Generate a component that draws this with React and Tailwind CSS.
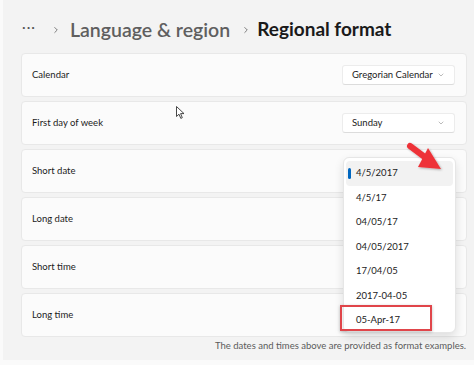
import { ChevronDown, ChevronRight } from 'lucide-react';

const ROWS = [
  { label: 'Calendar', value: 'Gregorian Calendar' },
  { label: 'First day of week', value: 'Sunday' },
  { label: 'Short date' },
  { label: 'Long date' },
  { label: 'Short time' },
  { label: 'Long time' },
];

const OPTIONS = ['4/5/2017', '4/5/17', '04/05/17', '04/05/2017', '17/04/05', '2017-04-05', '05-Apr-17'];

const font = { fontFamily: 'Lato, "Noto Sans", sans-serif' };

function Select({ value }) {
  return (
    <div className="w-[113px] h-[20px] flex items-center justify-between pl-[9px] pr-[9px] bg-white rounded-[3px] border border-[#ececec] border-b-[#dcdcdc] text-[9.5px] text-[#1b1b1b] whitespace-nowrap">
      <span>{value}</span>
      <ChevronDown className="w-[8px] h-[8px] text-[#777]" strokeWidth={1.5} />
    </div>
  );
}

export default function App() {
  return (
    <div className="w-[474px] h-[365px] bg-[#fafafa] relative overflow-hidden" style={font}>
      <div className="ml-[3px] h-[360px] bg-[#f3f3f3] flex flex-col">
        {/* Breadcrumb */}
        <div className="h-[53px] flex items-center pl-[19px] pt-[6px]">
          <span className="text-[14px] tracking-[1px] text-[#555] leading-none -mt-[5px]">···</span>
          <ChevronRight className="w-[10px] h-[10px] ml-[15px] text-[#666]" strokeWidth={2} />
          <span className="ml-[9px] text-[19.5px] font-semibold text-[#5f5f5f]">Language &amp; region</span>
          <ChevronRight className="w-[10px] h-[10px] ml-[11px] text-[#666]" strokeWidth={2} />
          <span className="ml-[6px] text-[19px] font-bold text-[#1a1a1a]">Regional format</span>
        </div>

        {/* Setting cards */}
        <div className="ml-[18px] w-[446px] flex flex-col gap-[4px]">
          {ROWS.map(({ label, value }) => (
            <div
              key={label}
              className="h-[44px] flex items-center justify-between pl-[10px] pr-[11px] bg-[#fbfbfb] border border-[#e8e8e8] rounded-[4px]"
            >
              <span className="text-[9.5px] text-[#1b1b1b]">{label}</span>
              {value && <Select value={value} />}
            </div>
          ))}
        </div>

        <p className="mt-[2px] w-[463px] text-right text-[9.5px] text-[#5b5b5b]">
          The dates and times above are provided as format examples.
        </p>
      </div>

      {/* Open dropdown */}
      <div className="absolute left-[343px] top-[157px] w-[113px] h-[176px] bg-white rounded-[6px] border border-[#e6e6e6] shadow-[0_4px_10px_rgba(0,0,0,0.12)] pt-[3px] px-[2px]">
        {OPTIONS.map((opt, i) => (
          <div
            key={opt}
            className={`relative h-[24.5px] flex items-center pl-[10px] text-[9.5px] text-[#1b1b1b] rounded-[4px] ${i === 0 ? 'bg-[#f2f2f2]' : ''}`}
          >
            {i === 0 && <span className="absolute left-[2px] top-[7px] w-[2.5px] h-[11px] rounded-full bg-[#0067c0]" />}
            {opt}
          </div>
        ))}
      </div>

      {/* Red highlight box */}
      <div className="absolute left-[340px] top-[305px] w-[92px] h-[26px] border-2 border-[#e0454a] shadow-[0_1px_3px_rgba(0,0,0,0.25)]" />

      {/* Red arrow annotation */}
      <svg className="absolute left-[400px] top-[138px]" width="50" height="40" viewBox="0 0 50 40">
        <defs>
          <filter id="sh" x="-20%" y="-20%" width="140%" height="140%">
            <feDropShadow dx="1" dy="1" stdDeviation="1" floodColor="#000" floodOpacity="0.3" />
          </filter>
        </defs>
        <g filter="url(#sh)">
          <line x1="10" y1="8" x2="26" y2="20" stroke="#ee3338" strokeWidth="6" strokeLinecap="round" />
          <polygon points="28,10 41,31 18,29" fill="#ee3338" />
        </g>
      </svg>

      {/* Mouse cursor */}
      <svg className="absolute left-[176px] top-[106px]" width="10" height="14" viewBox="0 0 10 14">
        <path d="M0.5 0.5 L0.5 10.5 L3 8.2 L4.8 12.4 L6.3 11.7 L4.6 7.6 L8 7.6 Z" fill="#fff" stroke="#333" strokeWidth="0.9" strokeLinejoin="round" />
      </svg>
    </div>
  );
}
